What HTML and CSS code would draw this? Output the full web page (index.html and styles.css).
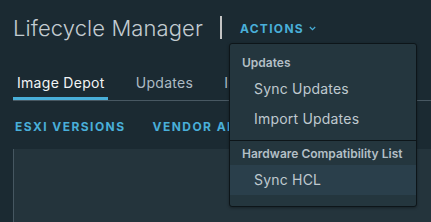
FILE: index.html
```html
<!DOCTYPE html>
<html>
<head>
<meta charset="utf-8">
<link rel="stylesheet" href="styles.css">
</head>
<body>
<div class="page">
  <header class="header">
    <h1 class="title">Lifecycle Manager</h1>
    <span class="divider"></span>
    <button class="actions">ACTIONS<svg class="chev" width="7" height="5" viewBox="0 0 7 5"><path d="M0.8 1 L3.5 3.6 L6.2 1" fill="none" stroke="#49afd9" stroke-width="1.2"/></svg></button>
  </header>
  <nav class="tabs">
    <span class="tab active">Image Depot</span>
    <span class="tab">Updates</span>
    <span class="tab">Imported ISOs</span>
  </nav>
  <nav class="subtabs">
    <span class="subtab">ESXI VERSIONS</span>
    <span class="subtab">VENDOR ADDONS</span>
    <span class="subtab">COMPONENTS</span>
  </nav>
  <section class="panel"></section>

  <div class="menu">
    <div class="menu-header">Updates</div>
    <div class="menu-item">Sync Updates</div>
    <div class="menu-item">Import Updates</div>
    <div class="menu-sep"></div>
    <div class="menu-header">Hardware Compatibility List</div>
    <div class="menu-item hover">Sync HCL</div>
  </div>
</div>
</body>
</html>
```

FILE: styles.css
```css
html, body {
  margin: 0;
  padding: 0;
  background: #1b2a32;
  height: 100%;
  overflow: hidden;
}
body {
  font-family: "Inter", "Noto Sans", sans-serif;
}
.page {
  position: relative;
  height: 222px;
  display: flex;
  flex-direction: column;
}
.header {
  display: flex;
  align-items: center;
  height: 56px;
  padding-left: 13px;
  box-sizing: border-box;
}
.title {
  margin: 0;
  font-size: 22px;
  font-weight: 300;
  color: #c3ccd1;
  letter-spacing: 0.1px;
  line-height: 56px;
}
.divider {
  width: 2px;
  height: 23px;
  background: #c4c4c4;
  margin-left: 17px;
  margin-top: -1px;
}
.actions {
  margin-left: 18px;
  background: none;
  border: none;
  padding: 0;
  font-family: inherit;
  font-size: 12px;
  font-weight: 700;
  letter-spacing: 1.3px;
  color: #49afd9;
  display: flex;
  align-items: center;
  gap: 5px;
}
.chev {
  display: block;
  margin-top: 1px;
}
.tabs {
  display: flex;
  gap: 24px;
  margin-top: 14px;
  margin-left: 13px;
  height: 30px;
  border-bottom: 1px solid #485862;
}
.tab {
  padding: 0 3px 0 4px;
  font-size: 14px;
  letter-spacing: 0.3px;
  color: #adbbc4;
  line-height: 26px;
  box-sizing: border-box;
  height: 30px;
  white-space: nowrap;
}
.tab.active {
  color: #f2f4f5;
  border-bottom: 3px solid #49afd9;
}
.subtabs {
  display: flex;
  gap: 27px;
  padding-left: 15px;
  height: 48px;
  align-items: flex-start;
}
.subtab {
  font-size: 12px;
  font-weight: 700;
  letter-spacing: 1.45px;
  color: #49afd9;
  line-height: 12px;
  margin-top: 20px;
  white-space: nowrap;
}
.panel {
  flex: 1;
  margin-left: 13px;
  background: #24343c;
  border-left: 1px solid #465761;
}
.menu {
  position: absolute;
  left: 229px;
  top: 43px;
  width: 188px;
  box-sizing: border-box;
  border: 1px solid #0d1519;
  border-radius: 3px;
  background: #24363e;
  padding: 6px 0 11px;
  box-shadow: 0 1px 3px rgba(0,0,0,0.35);
}
.menu-header {
  height: 24px;
  line-height: 26px;
  padding-left: 12px;
  font-size: 12px;
  font-weight: 600;
  color: #b3bfc6;
  white-space: nowrap;
}
.menu-item {
  height: 30px;
  line-height: 30px;
  padding-left: 24px;
  font-size: 14px;
  letter-spacing: 0.2px;
  color: #bfc9cf;
}
.menu-item.hover {
  background: #2a3f4b;
}
.menu-sep {
  height: 1px;
  background: #0d1519;
  margin: 6px 0 0;
}
```
